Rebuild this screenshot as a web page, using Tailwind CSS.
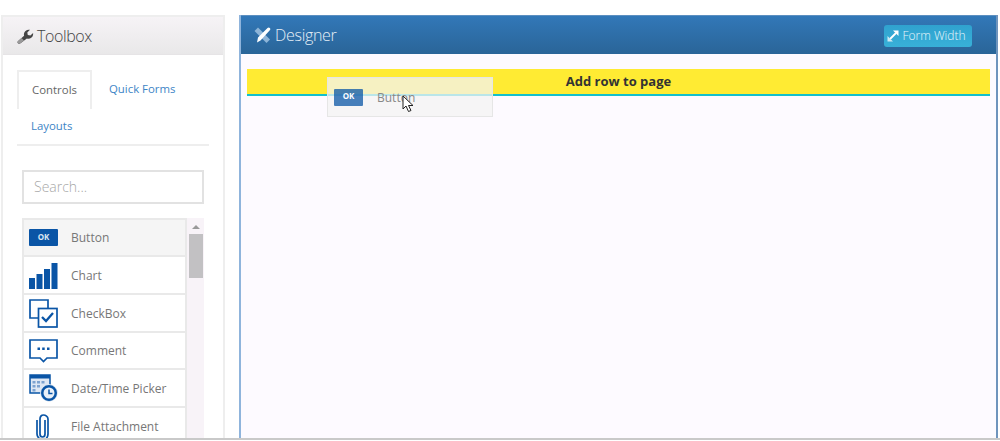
<!DOCTYPE html>
<html lang="en">
<head>
    <meta charset="UTF-8">
    <meta name="viewport" content="width=device-width, initial-scale=1.0">
    <title>Form Designer</title>
    <script src="https://cdn.jsdelivr.net/npm/@tailwindcss/browser@4"></script>
</head>
<body class="bg-white font-['Open_Sans',sans-serif] font-light text-[#555]">
    <div class="relative h-[441px] w-[1000px] overflow-hidden">
        <div class="flex h-[440px] items-start gap-[14px] overflow-hidden border-b-2 border-[#c9c9c9] pl-px pr-[2px] pt-[15px]">

            <!-- Toolbox -->
            <div class="h-[440px] w-[224px] shrink-0 border-2 border-[#eeeeee]">
                <div class="flex h-[38px] items-center gap-[3px] border-b border-[#e6e4e6] bg-gradient-to-b from-[#f6f3f6] to-[#e9e8e9] pl-[14px] text-[#444]">
                    <svg class="h-[16px] w-[17px]" viewBox="0 0 17 16"><path d="M1 15.200c-.7-.7-.6-1.500.1-2.200l6-5.200c-.5-1.800 0-3.600 1.400-4.900 1.300-1.100 3-1.500 4.500-1.100l-2.700 2.600.5 2.500 2.600.6 2.700-2.500c.3 1.800-.3 3.500-1.600 4.600-1.300 1.200-3.100 1.500-4.600 1L3.500 15.300c-.8.700-1.800.6-2.500-.1z" fill="#444"/><path d="M1 15.200c-.7-.7-.6-1.500.1-2.200l3.500-3 2.400 2.600-3.500 2.700c-.8.700-1.800.6-2.500-.1z" fill="#999"/></svg>
                    <span class="text-[16px] tracking-[-0.4px]">Toolbox</span>
                </div>
                <div class="px-[14px] pt-[15px]">

                    <!-- Tabs -->
                    <div class="h-[76px] border-b-2 border-[#eeeeee] text-[11.4px] font-normal">
                        <div class="flex h-[38px]">
                            <div class="flex h-[39px] w-[75px] items-center justify-center border-2 border-b-0 border-[#eeeeee] bg-white pb-[2px] text-[#666]">Controls</div>
                            <div class="flex items-center pb-[1px] pl-[17px] text-[#3d85c6]">Quick Forms</div>
                        </div>
                        <div class="flex h-[37px] items-center pb-[2px] pl-[14px] text-[#3d85c6]">Layouts</div>
                    </div>

                    <!-- Search -->
                    <div class="mx-[5px] mt-[24px] flex h-[34px] items-center border-2 border-[#e2e2e2] pb-[1px] pl-[10px] text-[14px] text-[#a8a8a8]">Search...</div>

                    <!-- Control list -->
                    <div class="mx-[5px] mt-[14px] flex h-[240px]">
                        <div class="w-[166px] border-x-2 border-t-2 border-[#e9e9e9] text-[12px] font-normal text-[#777]">
                            <div class="flex h-[37px] items-center gap-[13px] border-b-2 border-[#e9e9e9] bg-[#f5f5f5] pl-[5px]">
                                <div class="flex h-[17px] w-[29px] shrink-0 items-center justify-center rounded-[1px] bg-[#0a55a6] pb-[2px] text-[8px] font-bold text-[#dbe6f3]">OK</div>
                                <span class="pt-[1px]">Button</span>
                            </div>
                            <div class="flex h-[38px] items-center gap-[13px] border-b-2 border-[#e9e9e9] pl-[5px]">
                                <svg class="h-[27px] w-[29px] shrink-0" viewBox="0 0 29 27" fill="#0a55a6"><rect x="0" y="16" width="6" height="11"/><rect x="7.500" y="12" width="6" height="15"/><rect x="15" y="7" width="6" height="20"/><rect x="22.500" y="1" width="6" height="26"/></svg>
                                <span class="pt-[1px]">Chart</span>
                            </div>
                            <div class="flex h-[38px] items-center gap-[13px] border-b-2 border-[#e9e9e9] pl-[5px]">
                                <svg class="h-[29px] w-[29px] shrink-0" viewBox="0 0 29 29" fill="none" stroke="#0a55a6" stroke-width="1.700"><path d="M9 19H1V1h18v8"/><rect x="9.500" y="9.500" width="18.500" height="18.500" fill="#fff"/><path d="M13 18l4 4 7-8" stroke-width="2.300"/></svg>
                                <span class="pt-[1px]">CheckBox</span>
                            </div>
                            <div class="flex h-[37px] items-center gap-[13px] border-b-2 border-[#e9e9e9] pl-[5px]">
                                <svg class="h-[24px] w-[29px] shrink-0" viewBox="0 0 29 24" fill="none" stroke="#0a55a6" stroke-width="1.700"><path d="M1 1h27v18H18l-3.500 3.500L11 19H1z"/><g fill="#0a55a6" stroke="none"><rect x="8.500" y="8.500" width="2.500" height="2.500"/><rect x="13.200" y="8.500" width="2.500" height="2.500"/><rect x="18" y="8.500" width="2.500" height="2.500"/></g></svg>
                                <span>Comment</span>
                            </div>
                            <div class="flex h-[38px] items-center gap-[13px] border-b-2 border-[#e9e9e9] pl-[5px]">
                                <svg class="h-[28px] w-[29px] shrink-0" viewBox="0 0 29 28"><path d="M1 1h20v18H1z" fill="#dfe8f4" stroke="#0a55a6" stroke-width="1.500"/><rect x="1" y="1" width="20" height="3.500" fill="#0a55a6"/><g fill="#7ea3d0"><rect x="3.500" y="7" width="3" height="2.500"/><rect x="8" y="7" width="3" height="2.500"/><rect x="12.500" y="7" width="3" height="2.500"/><rect x="3.500" y="11" width="3" height="2.500"/><rect x="8" y="11" width="3" height="2.500"/><rect x="3.500" y="15" width="3" height="2.500"/></g><circle cx="20" cy="19" r="8.500" fill="#0a55a6" stroke="#fff" stroke-width=".8"/><circle cx="20" cy="19" r="5.500" fill="#e9f0f8"/><path d="M20 15.500V19.500H23.500" fill="none" stroke="#0a55a6" stroke-width="1.500"/></svg>
                                <span class="pt-[1px]">Date/Time Picker</span>
                            </div>
                            <div class="flex h-[38px] items-center gap-[13px] pl-[5px]">
                                <svg class="h-[27px] w-[29px] shrink-0" viewBox="0 0 29 27" fill="none" stroke="#0a55a6" stroke-width="1.700"><path d="M11 5v15c0 2 1 3 2.500 3s2.500-1 2.500-3V6"/><path d="M11 5c0-2.500 1.500-4 3.500-4S19 2.500 19 5v15c0 3-2 6-5 6s-6-3-6-6V6"/></svg>
                                <span>File Attachment</span>
                            </div>
                        </div>

                        <!-- Scrollbar -->
                        <div class="flex h-full w-[17px] flex-col items-center bg-[#f8f3f8] pt-[7px]">
                            <div class="h-0 w-0 border-x-[4px] border-b-[4px] border-x-transparent border-b-[#999]"></div>
                            <div class="mt-[5px] h-[44px] w-[14px] bg-[#c2c1c3]"></div>
                        </div>
                    </div>
                </div>
            </div>

            <!-- Designer -->
            <div class="h-[440px] flex-1 border-2 border-t-0 border-[#8fb4dc] border-r-[#6f94bd] bg-[#fdfaff]">
                <div class="flex h-[39px] items-center justify-between border-t border-[#5c8fc0] bg-gradient-to-b from-[#3278b8] to-[#2a6598] pl-[13px] pr-[24px] text-white">
                    <div class="flex items-center gap-[4px]">
                        <svg class="h-[18px] w-[17px]" viewBox="0 0 17 18"><path d="M.5 5L4 1.500 16 13.500 12.500 17z" fill="#8db4d8"/><path d="M3 16.500l1-5L13.500 2c.7-.7 1.700-.7 2.300 0 .7.700.7 1.600 0 2.300L6.500 14.500z" fill="#fff"/></svg>
                        <span class="text-[16px] tracking-[-0.3px] text-[#e6eff7]">Designer</span>
                    </div>
                    <div class="mt-[2px] flex h-[22px] w-[88px] items-center justify-center gap-[3px] rounded-[3px] bg-gradient-to-b from-[#30a2cf] to-[#38b0d8] pr-[3px] text-[12px] text-[#e8f6fb]">
                        <svg class="h-[12px] w-[12px]" viewBox="0 0 12 12"><path d="M3 9l6-6" stroke="#fff" stroke-width="1.800" fill="none"/><path d="M6 .5h5.500V6z" fill="#fff"/><path d="M6 11.500H.5V6z" fill="#cfe9f4"/></svg>
                        <span>Form Width</span>
                    </div>
                </div>
                <div class="px-[6px] pt-[15px]">
                    <div class="flex h-[27px] items-center justify-center border-b-2 border-[#13c0cc] bg-[#ffeb33] text-[13px] font-bold text-[#333]">Add row to page</div>
                </div>
            </div>
        </div>

        <!-- Control being dragged -->
        <div class="absolute left-[327px] top-[77px] flex h-[40px] w-[166px] items-center gap-[14px] border border-[#e6e6e6] bg-[#f3f3f3]/75 pl-[6px] text-[12px] font-normal text-[#888]">
            <div class="flex h-[17px] w-[29px] shrink-0 items-center justify-center rounded-[1px] bg-[#0a55a6]/75 pb-[2px] text-[8px] font-bold text-white">OK</div>
            <span class="pt-[1px]">Button</span>
        </div>

        <!-- Mouse cursor -->
        <svg class="absolute left-[402px] top-[95px] h-[18px] w-[13px]" viewBox="0 0 13 18"><path d="M1 1v13l3-3 2.500 5.500 2.500-1L6.500 10.500H11z" fill="#fff" stroke="#222" stroke-width="1"/></svg>
    </div>
</body>
</html>
